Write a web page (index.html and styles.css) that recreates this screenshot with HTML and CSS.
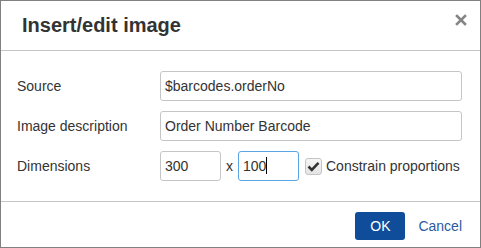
FILE: index.html
```html
<!DOCTYPE html>
<html>
<head>
<meta charset="utf-8">
<link rel="stylesheet" href="styles.css">
</head>
<body>
<div class="dialog">
  <div class="head">
    <div class="title">Insert/edit image</div>
    <svg class="close" width="12" height="12" viewBox="0 0 12 12"><path d="M2 2 L10 10 M10 2 L2 10" stroke="#858585" stroke-width="2.6" stroke-linecap="square"/></svg>
  </div>
  <div class="body">
    <label class="lbl">Source</label>
    <div class="field"><div class="input wide">$barcodes.orderNo</div></div>
    <label class="lbl">Image description</label>
    <div class="field"><div class="input wide">Order Number Barcode</div></div>
    <label class="lbl">Dimensions</label>
    <div class="field dims">
      <div class="input small">300</div>
      <span class="times">x</span>
      <div class="input small focus">100<span class="caret"></span></div>
      <span class="check"><svg width="13" height="11" viewBox="0 0 13 11"><path d="M1.5 5.5 L4.8 8.8 L11.5 1.8" fill="none" stroke="#333" stroke-width="2.6"/></svg></span>
      <span class="cbtext">Constrain proportions</span>
    </div>
  </div>
  <div class="foot">
    <div class="ok">OK</div>
    <div class="cancel">Cancel</div>
  </div>
</div>
</body>
</html>
```
FILE: styles.css
```css
* { box-sizing: border-box; }
html, body { margin: 0; padding: 0; background: #fff; }
body { font-family: "Liberation Sans", Arial, sans-serif; font-size: 14px; color: #333; }
.dialog { width: 481px; height: 248px; border: 1px solid #808080; display: flex; flex-direction: column; background: #fff; }
.head { height: 50px; border-bottom: 1px solid #c5c5c5; display: flex; align-items: flex-start; justify-content: space-between; padding: 0 13px 0 21px; }
.title { font-size: 20px; font-weight: bold; line-height: 20px; margin-top: 14px; color: #333; }
.close { margin-top: 13px; }
.body { height: 151px; border-bottom: 1px solid #c5c5c5; padding: 20px 18px 20px 16px; display: grid; grid-template-columns: 143px 1fr; grid-auto-rows: 30px; row-gap: 10px; }
.lbl { display: flex; align-items: center; color: #333; }
.field { display: flex; align-items: center; }
.input { height: 30px; border: 1px solid #c5c5c5; border-radius: 3px; padding: 0 4px; line-height: 28px; color: #333; background: #fff; }
.wide { flex: 1; }
.small { width: 61px; }
.focus { border-color: #59a5e5; }
.caret { display: inline-block; width: 1px; height: 17px; background: #000; vertical-align: -3px; }
.times { width: 17px; text-align: center; margin-right: 0; }
.dims .focus { margin-left: 0; }
.check { width: 17px; height: 17px; margin-left: 6px; border: 1px solid #c5c5c5; border-radius: 3px; background: linear-gradient(#f5f5f5, #e4e4e4); display: flex; align-items: center; justify-content: center; }
.cbtext { margin-left: 4px; }
.foot { flex: 1; display: flex; align-items: flex-start; justify-content: flex-end; padding: 10px 18px 0 0; }
.ok { width: 50px; height: 28px; border-radius: 3px; background: #0f4c99; color: #fff; display: flex; align-items: center; justify-content: center; }
.cancel { height: 28px; line-height: 28px; margin-left: 13px; color: #2b5a9e; }
```
